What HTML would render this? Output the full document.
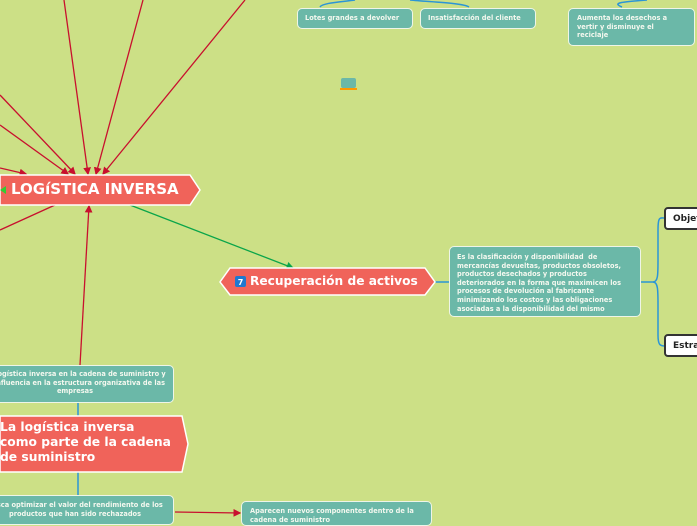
<!DOCTYPE html>
<html><head><meta charset="utf-8"><style>
html,body{margin:0;padding:0;width:697px;height:520px;overflow:hidden;background:#cce086;font-family:"DejaVu Sans",sans-serif}
svg{position:absolute;left:0;top:0}
.b{position:absolute;background:#6bb8a8;border:1.5px solid #eef5e8;border-radius:5px;color:#f4f8ef;font-weight:bold;font-size:6.6px;line-height:8.6px;box-sizing:border-box}
.k{position:absolute;background:#fff;border:2px solid #333;border-radius:4px;font-weight:bold;font-size:9px;color:#222;box-sizing:border-box;padding:5px 0 0 7px;white-space:nowrap;overflow:hidden}
.t{position:absolute;color:#fff;font-weight:bold;white-space:nowrap}
</style></head><body>
<svg width="697" height="520">
<defs><marker id="ar" markerWidth="6" markerHeight="6" refX="5" refY="3" orient="auto"><path d="M0,0L6,3L0,6z" fill="#c8102e"/></marker>
<marker id="ag" markerWidth="6" markerHeight="6" refX="5" refY="3" orient="auto"><path d="M0,0L6,3L0,6z" fill="#0aa54a"/></marker></defs>
<g stroke="#c8102e" stroke-width="1.3" fill="none" marker-end="url(#ar)">
<line x1="64" y1="0" x2="88" y2="174"/>
<line x1="143" y1="0" x2="96" y2="174"/>
<line x1="245" y1="0" x2="103" y2="174"/>
<line x1="0" y1="95" x2="75" y2="174"/>
<line x1="0" y1="125" x2="68" y2="174"/>
<line x1="0" y1="168" x2="26" y2="174"/>
<line x1="80" y1="365" x2="89" y2="206"/>
<line x1="175" y1="512" x2="240" y2="513"/>
</g>
<line x1="55" y1="205" x2="0" y2="230" stroke="#c8102e" stroke-width="1.3"/>
<line x1="130" y1="205" x2="293" y2="268" stroke="#0aa54a" stroke-width="1.3" marker-end="url(#ag)"/>
<g stroke="#2b95d6" stroke-width="1.5" fill="none">
<path d="M435,282H450"/>
<path d="M640,282H653C658,282 658,275 658,260V230C658,216 660,218 665,218"/>
<path d="M653,282C658,282 658,290 658,305V335C658,345 660,346 665,346"/>
<path d="M78,402V416M78,472V496"/>
<path d="M355,0C340,2 322,3 320,7M410,0C430,2 463,3 469,7M647,0C620,2 612,3 622,7"/>
</g>
<path d="M0,175H190L200,190L190,205H0Z" fill="#f0635a" stroke="#fff" stroke-width="1.5"/>
<path d="M0,190l6,-4l0,8z" fill="#3c3"/>
<path d="M230,268H425L435,282L425,295H230L220,282Z" fill="#f0635a" stroke="#fff" stroke-width="1.5"/>
<rect x="235" y="276" width="11" height="11" rx="2" fill="#1e78d0"/>
<text x="240.5" y="285" fill="#fff" font-size="8" font-weight="bold" text-anchor="middle" font-family="DejaVu Sans">7</text>
<path d="M0,416H182L188,444L182,472H0Z" fill="#f0635a" stroke="#fff" stroke-width="1.5"/>
<rect x="341" y="78" width="15" height="10" rx="2" fill="#6bb8a8"/>
<rect x="340" y="88" width="17" height="2" fill="#f90"/>
</svg>
<div class="t" style="left:11px;top:180px;font-size:15px">LOGíSTICA INVERSA</div>
<div class="t" style="left:250px;top:274px;font-size:12.2px">Recuperación de activos</div>
<div class="t" style="left:0;top:420px;font-size:12.3px;line-height:15px">La logística inversa<br>como parte de la cadena<br>de suministro</div>
<div class="b" style="left:449px;top:246px;width:192px;height:71px;padding:6px 7px">Es la clasificación y disponibilidad &nbsp;de mercancías devueltas, productos obsoletos, productos desechados y productos deteriorados en la forma que maximicen los procesos de devolución al fabricante minimizando los costos y las obligaciones asociadas a la disponibilidad del mismo</div>
<div class="k" style="left:664px;top:207px;width:40px;height:23px">Objet</div>
<div class="k" style="left:664px;top:334px;width:40px;height:23px">Estra</div>
<div class="b" style="left:297px;top:8px;width:116px;height:21px;padding:5px 7px">Lotes grandes a devolver</div>
<div class="b" style="left:420px;top:8px;width:116px;height:21px;padding:5px 7px">Insatisfacción del cliente</div>
<div class="b" style="left:568px;top:8px;width:127px;height:38px;padding:5px 22px 0 8px">Aumenta los desechos a vertir y disminuye el reciclaje</div>
<div class="b" style="left:-24px;top:365px;width:198px;height:38px;padding:4px 4px;text-align:center">La logística inversa en la cadena de suministro y la influencia en la estructura organizativa de las empresas</div>
<div class="b" style="left:-24px;top:495px;width:198px;height:30px;padding:5px 4px;text-align:center">Busca optimizar el valor del rendimiento de los productos que han sido rechazados</div>
<div class="b" style="left:241px;top:501px;width:191px;height:25px;padding:5px 8px">Aparecen nuevos componentes dentro de la cadena de suministro</div>
</body></html>
